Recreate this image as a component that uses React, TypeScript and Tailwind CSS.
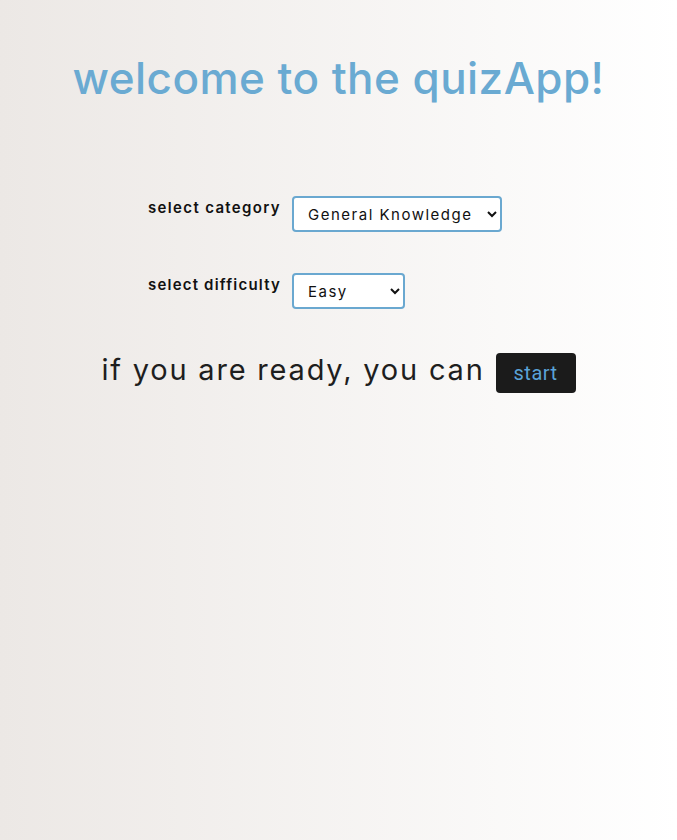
export default function App() {
  return (
    <div className="min-h-[840px] w-full bg-gradient-to-r from-[#ece8e5] to-white font-['Inter',sans-serif]">
      <h1 className="pt-[50px] text-center text-[44px] font-medium leading-[56px] tracking-[0.45px] text-[#6aaad2]">
        welcome to the quizApp!
      </h1>

      <div className="mt-[90px] flex flex-col gap-[41px] pl-[148px]">
        <div className="flex items-start gap-[11px]">
          <label className="mt-[1px] text-[15px] font-semibold tracking-[1.35px] text-[#111]">select category</label>
          <select className="h-[36px] w-[210px] rounded-[4px] border-2 border-[#6aa8d0] bg-white pl-[10px] text-[15px] tracking-[1.5px] text-[#111] outline-none">
            <option>General Knowledge</option>
          </select>
        </div>
        <div className="flex items-start gap-[11px]">
          <label className="mt-[1px] text-[15px] font-semibold tracking-[1.2px] text-[#111]">select difficulty</label>
          <select className="h-[36px] w-[113px] rounded-[4px] border-2 border-[#6aa8d0] bg-white pl-[10px] text-[15px] tracking-[1.5px] text-[#111] outline-none">
            <option>Easy</option>
            <option>Medium</option>
            <option>Hard</option>
          </select>
        </div>
      </div>

      <div className="mt-[39px] flex items-center justify-center gap-[11px]">
        <span className="mb-[7px] text-[29px] font-normal tracking-[1.8px] text-[#1e1e1e]">if you are ready, you can</span>
        <button className="h-[40px] w-[80px] rounded-[4px] bg-[#1b1b1b] font-['Roboto',sans-serif] text-[20px] tracking-[0.5px] text-[#5aa3d8]">
          start
        </button>
      </div>
    </div>
  );
}
